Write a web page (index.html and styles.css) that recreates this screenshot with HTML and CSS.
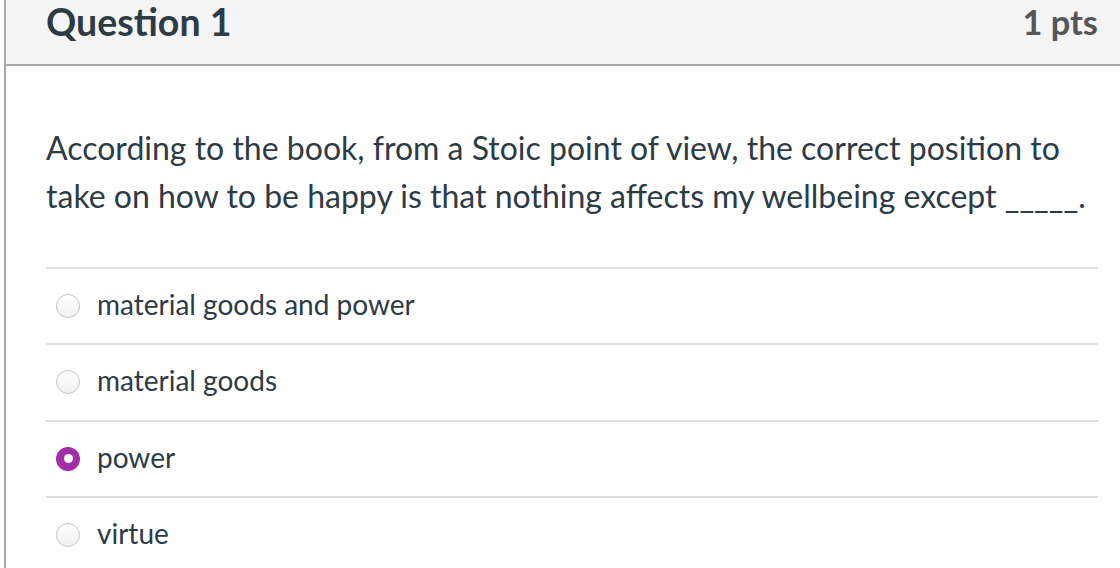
FILE: index.html
```html
<!DOCTYPE html>
<html>
<head>
<meta charset="utf-8">
<link rel="stylesheet" href="styles.css">
</head>
<body>
<div class="question">
  <div class="header">
    <h2 class="title">Question 1</h2>
    <span class="points">1 pts</span>
  </div>
  <div class="body">
    <p class="text">According to the book, from a Stoic point of view, the correct position to take on how to be happy is that nothing affects my wellbeing except _____.</p>
    <div class="answers">
      <label class="answer"><span class="radio"></span><span class="label">material goods and power</span></label>
      <label class="answer"><span class="radio"></span><span class="label">material goods</span></label>
      <label class="answer"><span class="radio checked"></span><span class="label">power</span></label>
      <label class="answer"><span class="radio"></span><span class="label">virtue</span></label>
    </div>
  </div>
</div>
</body>
</html>
```
FILE: styles.css
```css
html, body {
  margin: 0;
  padding: 0;
  background: #fff;
  overflow: hidden;
}
body {
  font-family: Lato, "Open Sans", sans-serif;
  color: #2d3b45;
}
.question {
  margin-left: 4px;
  border-left: 2px solid #a8a8a8;
  min-height: 568px;
}
.header {
  height: 64px;
  background: #f5f5f5;
  border-bottom: 2px solid #a8a8a8;
  display: flex;
  align-items: center;
  justify-content: space-between;
  padding: 0 22px 0 40px;
}
.title {
  margin: 0;
  font-size: 37.5px;
  font-weight: 700;
  color: #2d3b45;
  line-height: 1;
  margin-top: -20px;
}
.points {
  font-size: 34.4px;
  font-weight: 700;
  color: #565656;
  line-height: 1;
  margin-top: -20px;
}
.body {
  padding: 0 22px 0 40px;
}
.text {
  margin: 58px 0 47px 0;
  font-size: 32px;
  line-height: 48px;
}
.answers {
  display: flex;
  flex-direction: column;
}
.answer {
  height: 76.3px;
  border-top: 2px solid #e0e0e0;
  display: flex;
  align-items: center;
  padding-left: 10px;
  box-sizing: border-box;
}
.radio {
  width: 24px;
  height: 24px;
  box-sizing: border-box;
  border-radius: 50%;
  border: 1px solid #c4c4c4;
  background: linear-gradient(#ffffff, #f0f0f0);
  display: flex;
  align-items: center;
  justify-content: center;
  flex: none;
}
.radio.checked {
  border: none;
  background: #a12ea8;
}
.radio.checked::after {
  content: "";
  width: 9px;
  height: 9px;
  border-radius: 50%;
  background: #fff;
}
.label {
  margin-left: 17px;
  font-size: 28px;
  line-height: 1;
  margin-top: -4px;
}
```
